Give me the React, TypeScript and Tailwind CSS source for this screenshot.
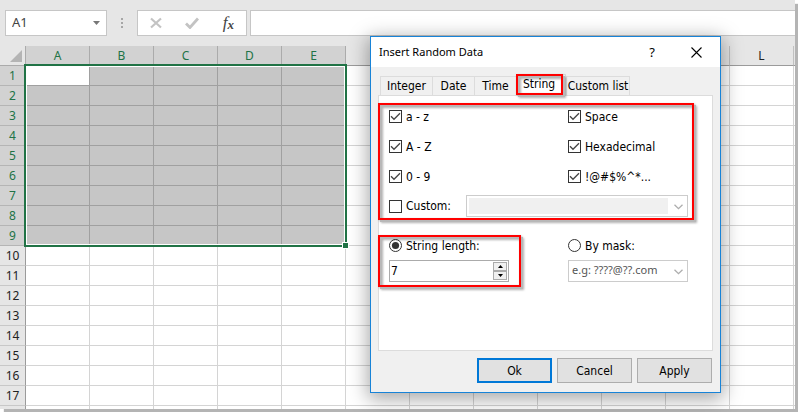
import React, { useState } from 'react';

const columns = ['A', 'B', 'C', 'D', 'E', '', '', '', '', '', '', 'L', ''];
const rows = Array.from({ length: 18 }, (_, i) => i + 1);
const tabs = ['Integer', 'Date', 'Time', 'String', 'Custom list'];

const isSelected = (col: number, row: number) => col < 5 && row <= 9;

const FormulaBar = () => (
  <div className="flex h-[46px] items-start bg-[#e6e6e6] pl-[5px] pt-[10px]">
    <div className="flex h-[26px] w-[102px] items-center border border-[#c6c6c6] bg-white">
      <input
        aria-label="Name box"
        defaultValue="A1"
        className="w-full min-w-0 flex-1 bg-transparent pl-[6px] text-[13px] text-[#444] outline-none"
      />
      <button aria-label="Open name list" className="px-[6px]">
        <svg width="7" height="4" viewBox="0 0 7 4" className="block">
          <path d="M0 0h7L3.5 4z" fill="#777" />
        </svg>
      </button>
    </div>
    <div className="flex h-[26px] w-[30px] flex-col items-center justify-center gap-[2px]">
      <span className="h-[2px] w-[2px] bg-[#a6a6a6]" />
      <span className="h-[2px] w-[2px] bg-[#a6a6a6]" />
      <span className="h-[2px] w-[2px] bg-[#a6a6a6]" />
    </div>
    <div className="flex h-[26px] w-[110px] items-center justify-between border border-[#c6c6c6] bg-white px-3">
      <button aria-label="Cancel entry">
        <svg width="12" height="12" viewBox="0 0 12 12" fill="none" stroke="#c3c3c3" strokeWidth="2.2" className="block">
          <path d="M1 1.5l10 9M11 1.5l-10 9" />
        </svg>
      </button>
      <button aria-label="Accept entry">
        <svg width="14" height="12" viewBox="0 0 14 12" fill="none" stroke="#c3c3c3" strokeWidth="2.8" className="block">
          <path d="M1 6.5l4 4L13 1.5" />
        </svg>
      </button>
      <button
        aria-label="Insert function"
        className="flex items-end font-['Liberation_Serif',serif] text-[17px] leading-4 text-[#444] italic"
      >
        <span>f</span>
        <span className="text-[13px] leading-3 font-bold">x</span>
      </button>
    </div>
    <input
      aria-label="Formula bar"
      className="ml-[3px] h-[26px] min-w-0 flex-1 border border-r-0 border-[#c6c6c6] bg-white outline-none"
    />
  </div>
);

const Sheet = () => (
  <div className="relative">
    <table className="w-max table-fixed border-separate border-spacing-0 text-[12px] leading-4">
      <thead>
        <tr className="h-5">
          <th className="w-[26px] border-r border-b border-[#ababab] bg-[#e6e6e6] p-0">
            <svg width="12" height="12" viewBox="0 0 12 12" className="ml-[10px] mt-px block">
              <path d="M12 0v12H0z" fill="#b4b4b4" />
            </svg>
          </th>
          {columns.map((name, c) => (
            <th
              key={c}
              className={`w-16 border-r border-b p-0 font-normal ${
                c < 5
                  ? 'border-r-[#ababab] border-b-[#217346] bg-[#d2d2d2] text-[#217346]'
                  : 'border-r-[#c0c0c0] border-b-[#9b9b9b] bg-[#e6e6e6] text-[#222]'
              }`}
            >
              {name}
            </th>
          ))}
        </tr>
      </thead>
      <tbody>
        {rows.map((row) => (
          <tr key={row} className="h-5">
            <th
              className={`border-r border-b border-r-[#9b9b9b] p-0 font-normal ${
                row <= 9 ? 'border-b-[#b5b5b5] bg-[#d2d2d2] text-[#217346]' : 'border-b-[#c8c8c8] bg-[#e6e6e6] text-[#222]'
              }`}
            >
              {row <= 17 && row}
            </th>
            {columns.map((_, c) => (
              <td
                key={c}
                className={`border-r border-b p-0 ${
                  isSelected(c, row) ? 'border-[#a0a0a0]' : 'border-[#d4d4d4]'
                } ${isSelected(c, row) && !(c === 0 && row === 1) ? 'bg-[#c6c6c6]' : 'bg-white'}`}
              />
            ))}
          </tr>
        ))}
      </tbody>
    </table>
    {/* selection outline with its fill handle */}
    <div className="absolute top-[18px] left-6 h-[183px] w-[323px] border-2 border-[#217346]">
      <div className="h-full border border-white" />
      <span className="absolute -right-[4px] -bottom-[4px] h-[7px] w-[7px] border border-white bg-[#217346]" />
    </div>
  </div>
);

interface OptionProps {
  label: string;
  type?: 'checkbox' | 'radio';
  checked: boolean;
  onChange: () => void;
}

const Option = ({ label, type = 'checkbox', checked, onChange }: OptionProps) => (
  <label className="flex h-[13px] items-center gap-1 whitespace-nowrap">
    <span className="relative h-[13px] w-[13px]">
      <input
        type={type}
        checked={checked}
        onChange={onChange}
        className={`block h-[13px] w-[13px] appearance-none border border-[#333] bg-white ${
          type === 'radio' ? 'rounded-full' : ''
        }`}
      />
      {checked && (
        <svg width="13" height="13" viewBox="0 0 13 13" className="pointer-events-none absolute inset-0">
          {type === 'radio' ? (
            <circle cx="6.5" cy="6.5" r="3.6" fill="#333" />
          ) : (
            <path d="M2 6.3l3 3 6-6" fill="none" stroke="#444" strokeWidth="1.3" />
          )}
        </svg>
      )}
    </span>
    {label}
  </label>
);

const Chevron = () => (
  <svg
    width="9"
    height="6"
    viewBox="0 0 9 6"
    fill="none"
    stroke="#adadad"
    strokeWidth="1.3"
    className="pointer-events-none absolute top-[8px] right-1"
  >
    <path d="M.5 .7l4 4 4-4" />
  </svg>
);

const Highlight = ({ className }: { className: string }) => (
  <div
    className={`pointer-events-none absolute border-2 border-[#ff0000] [filter:drop-shadow(2px_2px_0_#b8b8b8)_drop-shadow(1px_1px_1px_rgba(0,0,0,0.3))] ${className}`}
  />
);

const Dialog = () => {
  const [checks, setChecks] = useState<Record<string, boolean>>({
    'a - z': true,
    'A - Z': true,
    '0 - 9': true,
    Space: true,
    Hexadecimal: true,
    '!@#$%^*...': true,
    'Custom:': false
  });
  const [mode, setMode] = useState<'length' | 'mask'>('length');
  const [length, setLength] = useState(7);

  const option = (label: string) => (
    <Option
      label={label}
      checked={checks[label]}
      onChange={() => setChecks({ ...checks, [label]: !checks[label] })}
    />
  );

  return (
    <div
      role="dialog"
      aria-label="Insert Random Data"
      className="absolute top-9 left-[370px] w-[351px] border border-[#1883d7] bg-[#f0f0f0] font-['DejaVu_Sans_Condensed','Noto_Sans',sans-serif] text-[12px] leading-4 text-black shadow-[0_4px_18px_2px_rgba(0,0,0,0.35)]"
    >
      <div className="flex h-[30px] items-center bg-white pl-2 pr-[18px] font-['Noto_Sans',sans-serif]">
        <h1 className="flex-1 text-[11px]">Insert Random Data</h1>
        <button aria-label="Help" className="mr-[36px] text-[13px]">?</button>
        <button aria-label="Close">
          <svg width="11" height="11" viewBox="0 0 11 11" stroke="#000" strokeWidth="1.1" className="block">
            <path d="M.5 .5l10 10M10.5 .5l-10 10" />
          </svg>
        </button>
      </div>

      <div className="px-[7px] pt-[7px] pb-[9px]">
        <div role="tablist" className="flex h-[21px] items-end pl-[2px]">
          {tabs.map((tab) => (
            <button
              key={tab}
              role="tab"
              aria-selected={tab === 'String'}
              className={`border border-b-0 border-[#dcdcdc] whitespace-nowrap ${
                tab === 'String' ? 'h-[21px] w-[50px] bg-white pb-[3px] pr-1' : '-mr-px h-[19px] bg-[#f0f0f0]'
              } ${tab === 'Integer' ? 'w-[53px]' : ''} ${tab === 'Date' || tab === 'Time' ? 'w-[43px]' : ''} ${
                tab === 'Custom list' ? 'w-[64px]' : ''
              }`}
            >
              {tab}
            </button>
          ))}
        </div>

        <div className="h-[256px] border border-[#dcdcdc] bg-white pt-[14px] pl-[10px]">
          <div className="grid w-[299px] grid-cols-[179px_1fr] gap-y-[17px]">
            {option('a - z')}
            {option('Space')}
            {option('A - Z')}
            {option('Hexadecimal')}
            {option('0 - 9')}
            {option('!@#$%^*...')}
          </div>
          <div className="mt-3 flex w-[299px] items-center justify-between">
            {option('Custom:')}
            <div className="relative h-[22px] w-[222px] border border-[#ccc] p-[2px]">
              <select
                aria-label="Custom characters"
                disabled
                className="block h-4 w-[199px] appearance-none bg-[#f0f0f0]"
              />
              <Chevron />
            </div>
          </div>
          <div className="mt-[22px] grid w-[299px] grid-cols-[179px_1fr] gap-y-2">
            <Option
              type="radio"
              label="String length:"
              checked={mode === 'length'}
              onChange={() => setMode('length')}
            />
            <Option type="radio" label="By mask:" checked={mode === 'mask'} onChange={() => setMode('mask')} />
            <div className="flex h-[22px] w-[120px] border border-[#ababab] p-px">
              <input
                aria-label="Length"
                value={length}
                onChange={(e) => setLength(Number(e.target.value) || 0)}
                className="w-full min-w-0 flex-1 outline-none"
              />
              <div className="flex w-[14px] flex-col">
                <button
                  aria-label="Increase"
                  onClick={() => setLength(length + 1)}
                  className="flex h-[9px] items-center justify-center border border-[#ababab] bg-[#f0f0f0]"
                >
                  <svg width="5" height="3" viewBox="0 0 5 3"><path d="M0 3h5L2.5 0z" /></svg>
                </button>
                <button
                  aria-label="Decrease"
                  onClick={() => setLength(length - 1)}
                  className="flex h-[9px] items-center justify-center border border-[#ababab] bg-[#f0f0f0]"
                >
                  <svg width="5" height="3" viewBox="0 0 5 3"><path d="M0 0h5L2.5 3z" /></svg>
                </button>
              </div>
            </div>
            <div className="relative h-[22px] w-[120px] border border-[#ccc]">
              <select
                aria-label="Mask"
                className="block h-[18px] w-full appearance-none pl-[3px] font-['Noto_Sans',sans-serif] text-[11px] text-[#555]"
              >
                <option>e.g: ????@??.com</option>
              </select>
              <Chevron />
            </div>
          </div>
        </div>

        <div className="mt-[7px] flex justify-end gap-[5px] pr-px">
          <button className="h-[25px] w-[75px] border-2 border-[#0078d7] bg-[#e1e1e1]">Ok</button>
          <button className="h-[25px] w-[75px] border border-[#adadad] bg-[#e1e1e1]">Cancel</button>
          <button className="h-[25px] w-[75px] border border-[#adadad] bg-[#e1e1e1]">Apply</button>
        </div>
      </div>

      <Highlight className="top-[37px] left-[145px] h-[21px] w-[47px]" />
      <Highlight className="top-[66px] left-[7px] h-[117px] w-[316px]" />
      <Highlight className="top-[198px] left-[7px] h-[52px] w-[143px]" />
    </div>
  );
};

export default function App() {
  return (
    <main className="h-screen overflow-hidden bg-white pr-[3px] pb-[3px] font-['Noto_Sans',sans-serif]">
      <div className="relative h-full shadow-[4px_4px_1px_#b4b4b4]">
        <div className="h-full overflow-hidden">
          <FormulaBar />
          <Sheet />
        </div>
        <Dialog />
      </div>
    </main>
  );
}
